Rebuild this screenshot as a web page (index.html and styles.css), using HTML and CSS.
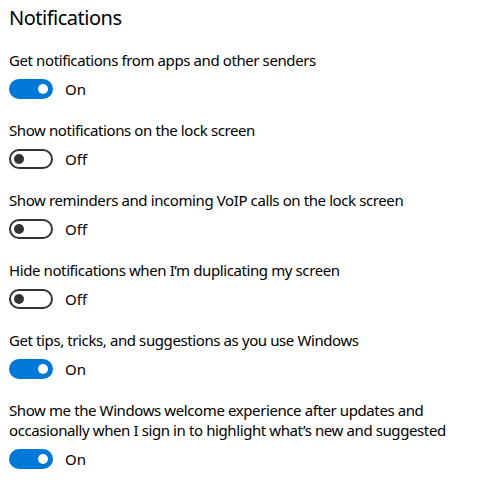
FILE: index.html
```html
<!DOCTYPE html>
<html>
<head>
<meta charset="utf-8">
<link rel="stylesheet" href="styles.css">
</head>
<body>
<div class="page">
  <h1 class="title">Notifications</h1>
  <div class="setting">
    <div class="label">Get notifications from apps and other senders</div>
    <div class="toggle-row"><span class="toggle on"><span class="knob"></span></span><span class="state">On</span></div>
  </div>
  <div class="setting">
    <div class="label">Show notifications on the lock screen</div>
    <div class="toggle-row"><span class="toggle"><span class="knob"></span></span><span class="state">Off</span></div>
  </div>
  <div class="setting">
    <div class="label">Show reminders and incoming VoIP calls on the lock screen</div>
    <div class="toggle-row"><span class="toggle"><span class="knob"></span></span><span class="state">Off</span></div>
  </div>
  <div class="setting">
    <div class="label">Hide notifications when I’m duplicating my screen</div>
    <div class="toggle-row"><span class="toggle"><span class="knob"></span></span><span class="state">Off</span></div>
  </div>
  <div class="setting">
    <div class="label">Get tips, tricks, and suggestions as you use Windows</div>
    <div class="toggle-row"><span class="toggle on"><span class="knob"></span></span><span class="state">On</span></div>
  </div>
  <div class="setting">
    <div class="label">Show me the Windows welcome experience after updates and<br>occasionally when I sign in to highlight what’s new and suggested</div>
    <div class="toggle-row"><span class="toggle on"><span class="knob"></span></span><span class="state">On</span></div>
  </div>
</div>
</body>
</html>
```
FILE: styles.css
```css
html, body {
  margin: 0;
  padding: 0;
  background: #ffffff;
}
.page {
  padding: 4px 9px 0 9px;
  font-family: "Noto Sans", "Open Sans", sans-serif;
  color: #000;
}
.title {
  margin: 0;
  font-size: 20px;
  font-weight: 400;
  line-height: 28px;
  letter-spacing: -0.5px;
}
.setting {
  margin-top: 18px;
}
.setting + .setting {
  margin-top: 21px;
}
.label {
  font-size: 15px;
  line-height: 20px;
  letter-spacing: -0.4px;
  white-space: nowrap;
}
.toggle-row {
  display: flex;
  align-items: center;
  margin-top: 9px;
  height: 20px;
}
.toggle {
  box-sizing: border-box;
  width: 44px;
  height: 20px;
  border: 2px solid #333;
  border-radius: 10px;
  display: flex;
  align-items: center;
  padding: 0 3px;
}
.toggle .knob {
  width: 10px;
  height: 10px;
  border-radius: 50%;
  background: #333;
}
.toggle.on {
  background: #0078d7;
  border-color: #0078d7;
  justify-content: flex-end;
}
.toggle.on .knob {
  background: #fff;
}
.state {
  margin-left: 12px;
  font-size: 15px;
  line-height: 20px;
}
```
